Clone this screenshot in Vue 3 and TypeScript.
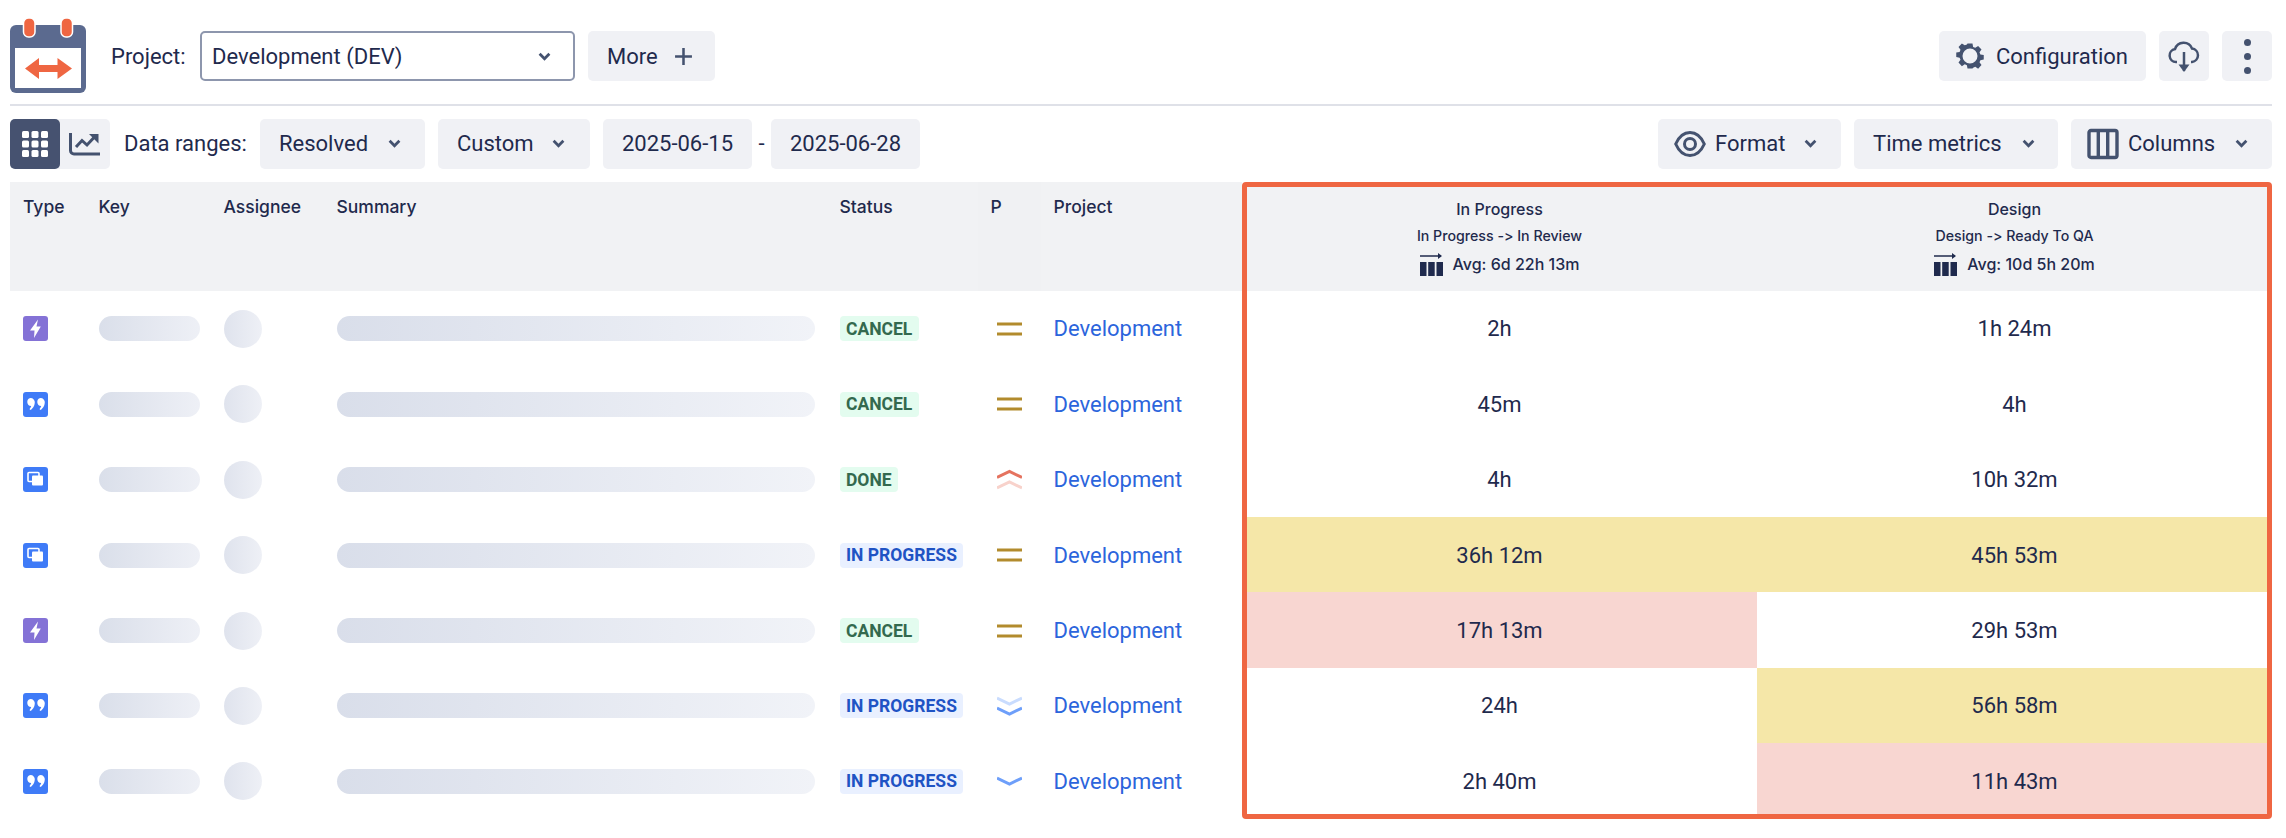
<script setup lang="ts">
type Row = { type: 'epic' | 'quote' | 'copy'; status: string; tone: 'green' | 'blue'; pri: 'med' | 'high' | 'low2' | 'low'; a: string; b: string; ac?: string; bc?: string }
const rows: Row[] = [
  { type: 'epic', status: 'CANCEL', tone: 'green', pri: 'med', a: '2h', b: '1h 24m' },
  { type: 'quote', status: 'CANCEL', tone: 'green', pri: 'med', a: '45m', b: '4h' },
  { type: 'copy', status: 'DONE', tone: 'green', pri: 'high', a: '4h', b: '10h 32m' },
  { type: 'copy', status: 'IN PROGRESS', tone: 'blue', pri: 'med', a: '36h 12m', b: '45h 53m', ac: 'yellow', bc: 'yellow' },
  { type: 'epic', status: 'CANCEL', tone: 'green', pri: 'med', a: '17h 13m', b: '29h 53m', ac: 'pink' },
  { type: 'quote', status: 'IN PROGRESS', tone: 'blue', pri: 'low2', a: '24h', b: '56h 58m', bc: 'yellow' },
  { type: 'quote', status: 'IN PROGRESS', tone: 'blue', pri: 'low', a: '2h 40m', b: '11h 43m', bc: 'pink' }
]
const metrics = [
  { title: 'In Progress', path: 'In Progress -> In Review', avg: 'Avg: 6d 22h 13m', col: 'col-a' },
  { title: 'Design', path: 'Design -> Ready To QA', avg: 'Avg: 10d 5h 20m', col: 'col-b' }
]
</script>

<template>
  <div class="page">
    <header class="bar top">
      <svg class="logo" width="76" height="76" viewBox="0 0 76 76">
        <rect x="0" y="7" width="76" height="68" rx="6" fill="#5b6a8f" />
        <rect x="5" y="30" width="66" height="40" fill="#fff" />
        <rect x="13.500" y="0" width="11.500" height="19" rx="5" fill="#ef6642" stroke="#fff" stroke-width="1.500" />
        <rect x="51" y="0" width="11.500" height="19" rx="5" fill="#ef6642" stroke="#fff" stroke-width="1.500" />
        <path d="M15 50.500 29 40v7h18.500v-7L62 50.500 47.500 61v-7H29v7z" fill="#ef6642" />
      </svg>
      <span class="label project-label">Project:</span>
      <div class="select">
        <span>Development (DEV)</span>
        <svg class="chev" viewBox="0 0 12 8"><path d="M1.500 1.500 6 6l4.500-4.500" /></svg>
      </div>
      <button class="btn more">More
        <svg width="19" height="19" viewBox="0 0 18 18"><path d="M9 1v16M1 9h16" fill="none" stroke="#44526f" stroke-width="2.400" /></svg>
      </button>
      <div class="right">
        <button class="btn config">
          <svg width="30" height="30" viewBox="0 0 24 24"><path fill="#44526f" fill-rule="evenodd" d="M10 2h4l.5 2.700 1.700.7 2.300-1.500 2.700 2.900-1.600 2.200.7 1.700 2.700.5v3.600l-2.700.5-.7 1.700 1.600 2.200-2.700 2.900-2.300-1.500-1.700.7L14 22h-4l-.5-2.700-1.700-.7-2.300 1.500-2.700-2.900 1.600-2.200-.7-1.700-2.700-.5v-3.600l2.700-.5.700-1.700-1.600-2.200 2.700-2.900 2.300 1.500 1.700-.7zM12 6a6 6 0 1 0 0 12 6 6 0 0 0 0-12z" /></svg>
          Configuration
        </button>
        <button class="btn icon-btn" aria-label="Export">
          <svg width="32" height="36" viewBox="0 0 32 36" fill="none" stroke="#44526f" stroke-width="2.500"><path d="M9 24H8a6.500 6.500 0 0 1-1-12.900A9 9 0 0 1 24 10.500 6.800 6.800 0 0 1 24 24h-1" /><path d="M16 14v19" /><path fill="#44526f" stroke="none" d="M10.500 26.500h11L16 34z" /></svg>
        </button>
        <button class="btn icon-btn dots" aria-label="More actions"><i></i><i></i><i></i></button>
      </div>
    </header>

    <div class="rule"></div>

    <nav class="bar second">
      <div class="toggle">
        <span class="tg active">
          <svg width="26" height="26" viewBox="0 0 26 26" fill="#fff"><rect x="0" y="0" width="7" height="7" rx="1.500" /><rect x="9.500" y="0" width="7" height="7" rx="1.500" /><rect x="19" y="0" width="7" height="7" rx="1.500" /><rect x="0" y="9.500" width="7" height="7" rx="1.500" /><rect x="9.500" y="9.500" width="7" height="7" rx="1.500" /><rect x="19" y="9.500" width="7" height="7" rx="1.500" /><rect x="0" y="19" width="7" height="7" rx="1.500" /><rect x="9.500" y="19" width="7" height="7" rx="1.500" /><rect x="19" y="19" width="7" height="7" rx="1.500" /></svg>
        </span>
        <span class="tg">
          <svg width="32" height="24" viewBox="0 0 32 24" fill="none" stroke="#44526f" stroke-width="3"><path d="M1.500 1v17.500a3.500 3.500 0 0 0 3.500 3.500h26" /><path d="M7 15l6-6.500 5 4.500 7-7.500" /><path fill="#44526f" stroke="none" d="M20 2h9.500v9.500z" /></svg>
        </span>
      </div>
      <span class="label ranges">Data ranges:</span>
      <button class="btn resolved">Resolved <svg class="chev" viewBox="0 0 12 8"><path d="M1.500 1.500 6 6l4.500-4.500" /></svg></button>
      <button class="btn custom">Custom <svg class="chev" viewBox="0 0 12 8"><path d="M1.500 1.500 6 6l4.500-4.500" /></svg></button>
      <button class="btn date">2025-06-15</button>
      <span class="dash">-</span>
      <button class="btn date">2025-06-28</button>
      <div class="right">
        <button class="btn format">
          <svg width="32" height="32" viewBox="0 0 32 32" fill="none" stroke="#44526f" stroke-width="3"><path d="M1.700 16C5 8.500 10 4.500 16 4.500S27 8.500 30.300 16C27 23.500 22 27.500 16 27.500S5 23.500 1.700 16z" /><circle cx="16" cy="16" r="5.500" /></svg>
          <span>Format</span>
          <svg class="chev" viewBox="0 0 12 8"><path d="M1.500 1.500 6 6l4.500-4.500" /></svg>
        </button>
        <button class="btn metrics-btn">Time metrics <svg class="chev" viewBox="0 0 12 8"><path d="M1.500 1.500 6 6l4.500-4.500" /></svg></button>
        <button class="btn columns">
          <svg width="32" height="32" viewBox="0 0 32 32" fill="none" stroke="#44526f" stroke-width="3.400"><rect x="2" y="2.500" width="28" height="27" rx="2" /><path d="M11.300 3v26M20.700 3v26" /></svg>
          <span>Columns</span>
          <svg class="chev" viewBox="0 0 12 8"><path d="M1.500 1.500 6 6l4.500-4.500" /></svg>
        </button>
      </div>
    </nav>

    <section class="table">
      <div class="grid">
        <div class="th">Type</div>
        <div class="th">Key</div>
        <div class="th">Assignee</div>
        <div class="th">Summary</div>
        <div class="th">Status</div>
        <div class="th th-p">P</div>
        <div class="th">Project</div>
        <template v-for="(r, i) in rows" :key="i">
          <div class="td">
            <span class="type" :class="r.type">
              <svg v-if="r.type === 'epic'" width="25" height="25" viewBox="0 0 25 25"><path fill="#fff" d="M15 3.500 7 14.500h4.500L11 22l6.800-11.500h-4.300z" /></svg>
              <svg v-else-if="r.type === 'quote'" width="25" height="25" viewBox="0 0 25 25" fill="#fff"><path d="M7.500 6a4.300 4.300 0 0 1 4.300 4.700c-.2 3.200-2 5.500-4 7.300l-1.300-.8c.8-1 1.500-2.200 1.700-3.100A4.100 4.100 0 0 1 7.500 6z" /><path d="M17.500 6a4.300 4.300 0 0 1 4.300 4.700c-.2 3.200-2 5.500-4 7.300l-1.300-.8c.8-1 1.500-2.200 1.700-3.100A4.100 4.100 0 0 1 17.500 6z" /></svg>
              <svg v-else width="25" height="25" viewBox="0 0 25 25"><rect x="5" y="5.500" width="11" height="9" rx="1" fill="none" stroke="#fff" stroke-width="1.600" /><rect x="9" y="8.500" width="11" height="10" rx="1" fill="#fff" /></svg>
            </span>
          </div>
          <div class="td"><span class="pill key"></span></div>
          <div class="td"><span class="avatar"></span></div>
          <div class="td"><span class="pill summary"></span></div>
          <div class="td"><span class="badge" :class="r.tone">{{ r.status }}</span></div>
          <div class="td td-p">
            <svg width="25" height="22" viewBox="0 0 25 22" fill="none" stroke-width="3">
              <g v-if="r.pri === 'med'" stroke="#b28b2d"><path d="M0 6h25M0 16h25" /></g>
              <g v-else-if="r.pri === 'high'"><path d="M0 8.500l12.500-6 12.500 6" stroke="#e5735f" /><path d="M0 19l12.500-6 12.500 6" stroke="#f8d2cb" /></g>
              <g v-else-if="r.pri === 'low2'"><path d="M0 3l12.500 6L25 3" stroke="#c9dcfe" /><path d="M0 13l12.500 6L25 13" stroke="#6e9ffa" /></g>
              <path v-else d="M0 8l12.500 6L25 8" stroke="#6e9ffa" />
            </svg>
          </div>
          <div class="td"><a class="link">Development</a></div>
        </template>
      </div>
      <div class="metrics">
        <div v-for="m in metrics" :key="m.title" class="mh" :class="m.col">
          <div class="mt">{{ m.title }}</div>
          <div class="mp">{{ m.path }}</div>
          <div class="ma">
            <svg width="23" height="24" viewBox="0 0 23 24"><path d="M0 4h21" stroke="#1f2a4d" stroke-width="1.500" /><path d="M18 1l4 3-4 3z" fill="#1f2a4d" /><path fill="#1f2a4d" d="M0 10h6.500v14H0zM8.200 10h6.500v14H8.200zM16.500 10H23v14h-6.500z" /></svg>
            <span>{{ m.avg }}</span>
          </div>
        </div>
        <template v-for="(r, i) in rows" :key="i">
          <div class="mc col-a" :class="r.ac">{{ r.a }}</div>
          <div class="mc col-b" :class="r.bc">{{ r.b }}</div>
        </template>
      </div>
    </section>
  </div>
</template>

<style scoped>
.page { width: 2286px; height: 838px; box-sizing: border-box; padding: 18px 14px 0 10px; font-family: Roboto, "Liberation Sans", sans-serif; color: #1f2a4d; background: #fff; overflow: hidden; }
.bar { display: flex; align-items: center; }
.top { height: 76px; }
.logo { flex: none; }
.label { font-size: 22px; white-space: nowrap; }
.project-label { margin-left: 25px; width: 89px; }
.select { box-sizing: border-box; width: 375px; height: 50px; border: 2px solid #8d96ad; border-radius: 5px; display: flex; align-items: center; justify-content: space-between; padding: 0 22px 0 10px; font-size: 22px; }
.chev { width: 13px; height: 9px; fill: none; stroke: #44526f; stroke-width: 2.600; flex: none; }
.btn { box-sizing: border-box; height: 50px; border: 0; border-radius: 5px; background: #f0f1f5; color: #1f2a4d; font: inherit; font-size: 22px; display: flex; align-items: center; padding: 0; white-space: nowrap; }
.more { margin-left: 13px; width: 127px; padding-left: 19px; gap: 16px; }
.right { margin-left: auto; display: flex; gap: 13px; align-items: center; }
.config { width: 207px; padding-left: 16px; gap: 11px; }
.icon-btn { width: 50px; justify-content: center; }
.dots { flex-direction: column; gap: 7px; }
.dots i { width: 7px; height: 7px; border-radius: 50%; background: #44526f; }
.rule { height: 2px; background: #dfe1e8; margin: 10px 0 12.500px; }
.toggle { display: flex; width: 100px; height: 50px; background: #f0f1f5; border-radius: 5px; }
.tg { flex: 1; display: flex; align-items: center; justify-content: center; border-radius: 5px; }
.tg.active { background: #465270; }
.ranges { margin-left: 14px; width: 136px; }
.resolved { width: 165px; padding: 0 24px 0 19px; justify-content: space-between; }
.custom { width: 152px; margin-left: 13px; padding: 0 25px 0 19px; justify-content: space-between; }
.date { width: 149px; margin-left: 13px; justify-content: center; }
.dash { width: 19px; margin-right: -13px; text-align: center; font-size: 22px; }
.format { width: 183px; padding: 0 24px 0 16px; gap: 9px; }
.format .chev, .columns .chev { margin-left: auto; }
.metrics-btn { width: 204px; padding: 0 23px 0 19px; justify-content: space-between; }
.columns { width: 201px; padding: 0 24px 0 16px; gap: 9px; }
.table { display: flex; margin-top: 13px; height: 637.500px; }
.grid { width: 1232px; flex: none; display: grid; grid-template-columns: 75.500px 125px 113px 503px 151px 63px 201.500px; grid-template-rows: 109.300px repeat(7, 75.400px); }
.th { background: #f1f2f4; padding: 13px 0 0 13px; font-family: Inter, Roboto, sans-serif; font-size: 17.500px; font-weight: 500; line-height: 24px; }
.th-p { background: #f0f1f3; }
.td { display: flex; align-items: center; padding: 1px 0 0 13px; min-width: 0; }
.td-p { padding-left: 19px; }
.type { width: 25px; height: 25px; border-radius: 3px; display: block; }
.type.epic { background: #8472d6; }
.type.quote, .type.copy { background: #3f7bf7; }
.type svg { display: block; }
.pill { display: block; height: 25px; border-radius: 13px; }
.key { width: 101px; background: linear-gradient(90deg, #dadfea, #eef0f6); }
.summary { width: 478px; background: linear-gradient(90deg, #d9deea, #f1f3f8); }
.avatar { width: 38px; height: 38px; border-radius: 50%; background: linear-gradient(90deg, #dfe3ed, #eef0f6); }
.badge { height: 25px; border-radius: 4px; padding: 0 6.500px; display: flex; align-items: center; font-size: 17.500px; font-weight: 700; white-space: nowrap; }
.badge.green { background: #e3fcef; color: #33694e; }
.badge.blue { background: #e9f0ff; color: #1f53c4; }
.link { color: #2c65dc; font-size: 22px; }
.metrics { box-sizing: border-box; width: 1030px; height: 637.500px; flex: none; border: 5px solid #ef6642; border-radius: 4px; display: grid; grid-template-columns: 1fr 1fr; grid-template-rows: 104.300px repeat(7, 75.400px); overflow: hidden; }
.mh { background: #f1f2f4; text-align: center; font-family: Inter, Roboto, sans-serif; font-weight: 500; display: flex; flex-direction: column; align-items: center; font-feature-settings: "calt" 0; font-variant-ligatures: none; }
.mt { font-size: 16px; line-height: 20px; margin-top: 12px; }
.mp { font-size: 14.200px; line-height: 20px; margin-top: 7px; }
.ma { font-size: 16px; line-height: 24px; margin-top: 6px; display: flex; align-items: center; gap: 10px; }
.ma svg { flex: none; }
.mc { display: flex; align-items: center; justify-content: center; font-size: 22px; padding-top: 1px; }
.col-a { padding-right: 5px; box-sizing: border-box; }
.col-b { padding-left: 5px; box-sizing: border-box; }
.yellow { background: #f5e7a8; }
.pink { background: #f8d6d1; }
</style>
